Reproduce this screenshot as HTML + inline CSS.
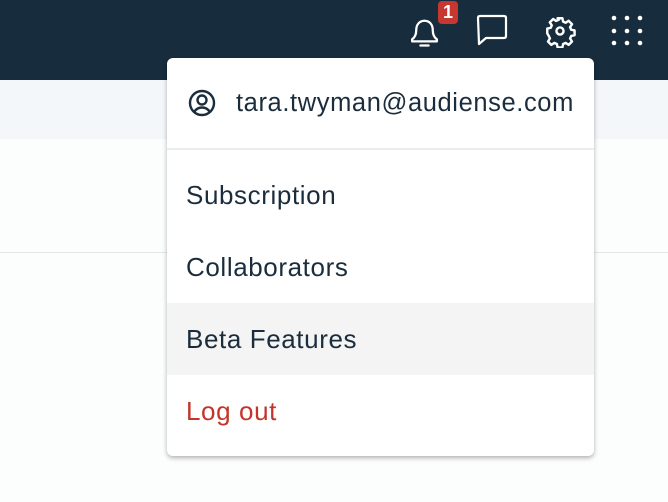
<!DOCTYPE html>
<html><head><style>
*{margin:0;padding:0;box-sizing:border-box}
body{width:668px;height:502px;overflow:hidden;background:#fcfdfd;font-family:"Liberation Sans",sans-serif;position:relative}
.hdr{position:absolute;left:0;top:0;width:668px;height:80px;background:#172c3c}
.strip{position:absolute;left:0;top:80px;width:668px;height:59px;background:#f3f7fa}
.line{position:absolute;left:0;top:252px;width:668px;height:1px;background:#e3e6e8}
.dd{position:absolute;left:167px;top:58px;width:427px;height:398px;background:#fff;border-radius:6px;box-shadow:0 2px 5px rgba(0,0,0,.3)}
.top{height:92px;border-bottom:2px solid #ececef;display:flex;align-items:center;padding-left:21px;font-size:25.5px;letter-spacing:0.6px;color:#1b2d3d}
.top svg{margin-right:20px}
.list{padding-top:9px}
.it{height:72px;line-height:72px;padding-left:19px;font-size:26px;letter-spacing:0.6px;color:#1b2d3d}
.beta{background:#f4f4f4}
.out{color:#c3342a}
.badge{position:absolute;left:438px;top:1px;width:20px;height:23px;background:#c6372f;border-radius:4px;color:#fff;font-size:18px;font-weight:bold;text-align:center;line-height:23px}
</style></head><body>
<div class="hdr">
<svg style="position:absolute;left:408px;top:13px" width="33" height="34" viewBox="0 0 32 32" fill="none" stroke="#fff" stroke-width="2.2" stroke-linejoin="round"><path d="M4 27h24v-2c-3-2-4-5-4-9 0-5-3-9-8-9s-8 4-8 9c0 4-1 7-4 9z"/><path d="M12 31h8" stroke-linecap="round"/></svg>
<div class="badge">1</div>
<svg style="position:absolute;left:475px;top:14px" width="34" height="32" viewBox="0 0 34 32" fill="none" stroke="#fff" stroke-width="2.2" stroke-linejoin="round"><path d="M3 4q0-2 2-2h24q2 0 2 2v18q0 2-2 2H11l-7 6z"/></svg>
<svg style="position:absolute;left:543px;top:14px" width="34" height="34" viewBox="0 0 24 24" fill="none" stroke="#fff" stroke-width="1.7" stroke-linejoin="round"><circle cx="12" cy="12" r="2.5"/><path d="M10.3 3h3.4l.5 2.4 1.8.8 2.1-1.4 2.4 2.4-1.4 2.1.8 1.8 2.4.5v3.4l-2.4.5-.8 1.8 1.4 2.1-2.4 2.4-2.1-1.4-1.8.8-.5 2.4h-3.4l-.5-2.4-1.8-.8-2.1 1.4-2.4-2.4 1.4-2.1-.8-1.8L3 13.7v-3.4l2.4-.5.8-1.8-1.4-2.1 2.4-2.4 2.1 1.4 1.8-.8z"/></svg>
<svg style="position:absolute;left:610px;top:14px" width="36" height="34" fill="#fff"><circle cx="4" cy="4" r="2.3"/><circle cx="17" cy="4" r="2.3"/><circle cx="30" cy="4" r="2.3"/><circle cx="4" cy="17" r="2.3"/><circle cx="17" cy="17" r="2.3"/><circle cx="30" cy="17" r="2.3"/><circle cx="4" cy="29" r="2.3"/><circle cx="17" cy="29" r="2.3"/><circle cx="30" cy="29" r="2.3"/></svg>
</div>
<div class="strip"></div>
<div class="line"></div>
<div class="dd">
<div class="top"><svg width="28" height="28" viewBox="0 0 28 28" fill="none" stroke="#1b2d3d" stroke-width="2.4"><circle cx="14" cy="14" r="12"/><circle cx="14" cy="11" r="4.5"/><path d="M6.5 22.5c2-3 4.5-4 7.5-4s5.5 1 7.5 4"/></svg>tara.twyman@audiense.com</div>
<div class="list">
<div class="it">Subscription</div>
<div class="it">Collaborators</div>
<div class="it beta">Beta Features</div>
<div class="it out">Log out</div>
</div>
</div>
</body></html>
